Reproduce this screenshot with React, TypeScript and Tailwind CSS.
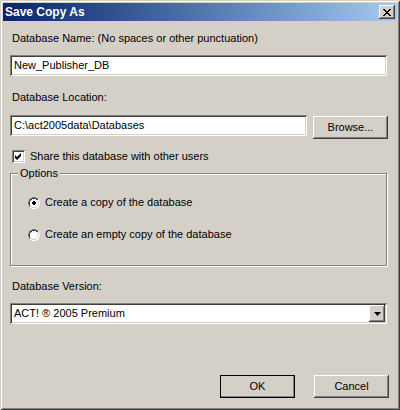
const raised =
  "shadow-[inset_-1px_-1px_0_#404040,inset_1px_1px_0_#ffffff,inset_-2px_-2px_0_#808080]";
const sunken =
  "shadow-[inset_1px_1px_0_#808080,inset_-1px_-1px_0_#ffffff,inset_2px_2px_0_#404040,inset_-2px_-2px_0_#d4d0c8]";

function Button({ label, className = "" }: { label: string; className?: string }) {
  return (
    <div
      className={`w-[75px] h-[23px] flex items-center justify-center bg-[#d4d0c8] text-black ${raised} ${className}`}
    >
      {label}
    </div>
  );
}

function Radio({ checked }: { checked?: boolean }) {
  return (
    <svg width="12" height="12" viewBox="0 0 12 12" className="shrink-0">
      <path d="M4 0h4v1h2v1h1v2h1v4h-1v2h-1v1h-2v1h-4v-1h-2v-1h-1v-2h-1v-4h1v-2h1v-1h2z" fill="#ffffff" />
      <path d="M4 0h4v1h-4zM2 1h2v1h-2zM8 1h2v1h-2zM1 2h1v2h-1zM0 4h1v4h-1zM1 8h1v2h-1z" fill="#808080" />
      <path d="M4 1h4v1h-4zM2 2h2v1h-2zM8 2h2v1h-2zM2 3h1v1h-1zM1 4h1v4h-1zM2 8h1v1h-1z" fill="#404040" />
      <path d="M10 2h1v2h-1zM11 4h1v4h-1zM10 8h1v2h-1zM8 10h2v1h-2zM2 10h2v1h-2zM4 11h4v1h-4z" fill="#ffffff" />
      <path d="M9 3h1v1h-1zM10 4h1v4h-1zM9 8h1v1h-1zM8 9h1v1h-1zM3 9h1v1h-1zM4 10h4v1h-4zM2 9h1v-1h-1z" fill="#d4d0c8" />
      {checked && <path d="M5 4h2v1h1v2h-1v1h-2v-1h-1v-2h1z" fill="#000000" />}
    </svg>
  );
}

export default function App() {
  return (
    <div
      className="w-[400px] h-[410px] bg-[#d4d0c8] p-[3px] flex flex-col text-[11px] leading-[13px] text-black shadow-[inset_1px_1px_0_#d4d0c8,inset_-1px_-1px_0_#404040,inset_2px_2px_0_#ffffff,inset_-2px_-2px_0_#808080]"
      style={{ fontFamily: '"Liberation Sans", Arial, sans-serif' }}
    >
      {/* title bar */}
      <div className="h-[18px] flex items-center justify-between pl-[2px] pr-[2px] bg-gradient-to-r from-[#0a246a] to-[#a6caf0]">
        <span className="text-white font-bold text-[12px]">Save Copy As</span>
        <div className={`w-[16px] h-[14px] bg-[#d4d0c8] flex items-center justify-center ${raised}`}>
          <svg width="8" height="7" viewBox="0 0 8 7">
            <path d="M0 0h2v1h1v1h2v-1h1v-1h2v1h-1v1h-1v1h-1v1h1v1h1v1h1v1h-2v-1h-1v-1h-2v1h-1v1h-2v-1h1v-1h1v-1h1v-1h-1v-1h-1v-1h-1z" fill="#000" />
          </svg>
        </div>
      </div>

      <div className="flex flex-col px-[7px]">
        <div className="mt-[11px] pl-[2px]">Database Name: (No spaces or other punctuation)</div>
        <div className={`mt-[10px] h-[21px] w-[377px] bg-white flex items-center pl-[4px] ${sunken}`}>
          New_Publisher_DB
        </div>

        <div className="mt-[15px] pl-[2px]">Database Location:</div>
        <div className="mt-[11px] flex items-start gap-[6px]">
          <div className={`h-[21px] w-[297px] bg-white flex items-center pl-[4px] ${sunken}`}>
            C:\act2005data\Databases
          </div>
          <Button label="Browse..." className="mt-[1px]" />
        </div>

        <div className="mt-[11px] flex items-center gap-[5px] pl-[2px]">
          <div className={`w-[13px] h-[13px] bg-white flex items-center justify-center ${sunken}`}>
            <svg width="7" height="7" viewBox="0 0 7 7">
              <path d="M6 0v3l-4 4-2-2v-3l2 2z" fill="#000" />
            </svg>
          </div>
          <span>Share this database with other users</span>
        </div>

        {/* options group */}
        <div className="relative mt-[10px] w-[377px] h-[93px] border border-[#808080] shadow-[1px_1px_0_#ffffff,inset_1px_1px_0_#ffffff]">
          <span className="absolute -top-[7px] left-[7px] px-[2px] bg-[#d4d0c8]">Options</span>
          <div className="flex flex-col pl-[17px] pt-[22px] gap-[19px]">
            <div className="flex items-center gap-[5px]">
              <Radio checked />
              <span>Create a copy of the database</span>
            </div>
            <div className="flex items-center gap-[5px]">
              <Radio />
              <span>Create an empty copy of the database</span>
            </div>
          </div>
        </div>

        <div className="mt-[14px] pl-[2px]">Database Version:</div>
        <div className={`mt-[10px] h-[21px] w-[377px] bg-white flex items-center justify-between pl-[4px] pr-[2px] ${sunken}`}>
          <span>ACT! ® 2005 Premium</span>
          <div className={`w-[16px] h-[17px] bg-[#d4d0c8] flex items-center justify-center ${raised}`}>
            <svg width="7" height="4" viewBox="0 0 7 4">
              <path d="M0 0h7l-3.5 4z" fill="#000" />
            </svg>
          </div>
        </div>

        <div className="mt-[51px] flex justify-end gap-[19px] pr-[1px]">
          <Button label="OK" className="ring-1 ring-black ring-inset" />
          <Button label="Cancel" />
        </div>
      </div>
    </div>
  );
}
